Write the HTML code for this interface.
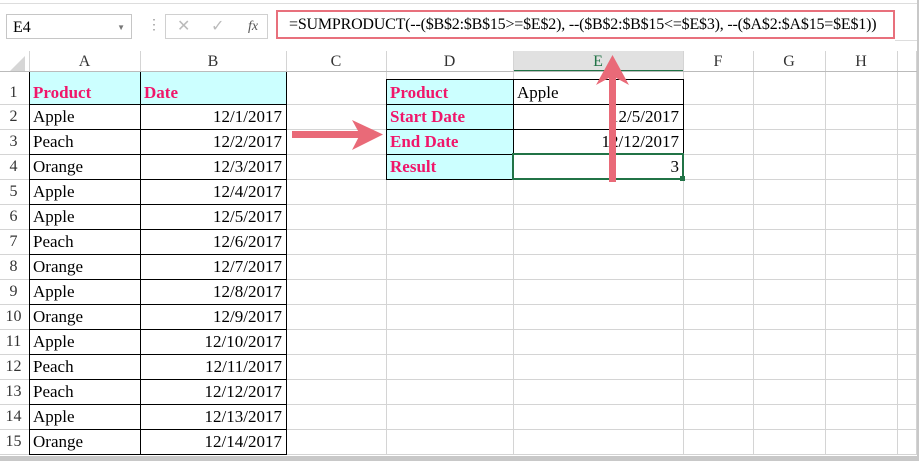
<!DOCTYPE html><html><head><style>
body{margin:0;width:919px;height:461px;background:#fff;position:relative;overflow:hidden;font-family:"Liberation Serif",serif}
.a{position:absolute}
.vl{position:absolute;width:1px;background:#d4d4d4;top:51px;height:404px}
.hl{position:absolute;height:1px;background:#d4d4d4;left:0;width:917px}
.ch{position:absolute;top:51px;height:21px;text-align:center;font-size:16px;line-height:21px;color:#333}
.rh{position:absolute;left:0;width:27px;text-align:center;font-size:16px;color:#333}
.c{position:absolute;font-size:17px;line-height:26px;box-sizing:border-box;padding:0 4px;white-space:nowrap}
.p{color:#f0166a;font-weight:bold}
.r{text-align:right}
</style></head><body>
<div class="a" style="left:0;top:3px;width:917px;height:1px;background:#ddd"></div>
<div class="a" style="left:6px;top:14px;width:126px;height:25px;border:1px solid #c6c6c6;font-family:'Liberation Serif',serif;font-size:16px;line-height:25px;padding-left:6px;box-sizing:border-box">E4<span style="position:absolute;right:6px;top:0;font-size:8px;color:#777">▼</span></div>
<div class="a" style="left:147px;top:17px;color:#999;font-size:14px">⋮</div>
<div class="a" style="left:165px;top:14px;width:103px;height:25px;border:1px solid #d0d0d0;box-sizing:border-box;color:#bbb;font-family:'Liberation Sans',sans-serif;font-size:16px;line-height:23px"><span style="position:absolute;left:11px">✕</span><span style="position:absolute;left:45px">✓</span><span style="position:absolute;left:82px;color:#555;font-style:italic;font-family:'Liberation Serif';font-size:14px">fx</span></div>
<div class="a" style="left:276px;top:10px;width:619px;height:29px;border:2px solid #e8707c;box-sizing:border-box;font-family:'Liberation Serif',serif;font-size:16px;line-height:25px;padding-left:11px;white-space:nowrap;letter-spacing:-0.2px">=SUMPRODUCT(--($B$2:$B$15&gt;=$E$2), --($B$2:$B$15&lt;=$E$3), --($A$2:$A$15=$E$1))</div>
<div class="a" style="left:895px;top:10px;width:22px;height:30px;border-bottom:1px solid #ddd"></div>
<div class="a" style="left:0;top:51px;width:917px;height:21px;background:#fff"></div>
<div class="a" style="left:513px;top:51px;width:170px;height:19px;background:#e1e1e1;border-bottom:2px solid #217346"></div>
<div class="a" style="left:10px;top:56px;width:0;height:0;border-left:15px solid transparent;border-bottom:15px solid #d6d6d6"></div>
<div class="ch" style="left:29px;width:111px">A</div><div class="ch" style="left:140px;width:146px">B</div><div class="ch" style="left:286px;width:100px">C</div><div class="ch" style="left:386px;width:127px">D</div><div class="ch" style="left:513px;width:170px;color:#217346">E</div><div class="ch" style="left:683px;width:70px">F</div><div class="ch" style="left:753px;width:72px">G</div><div class="ch" style="left:825px;width:72px">H</div>
<div class="vl" style="left:29px"></div><div class="vl" style="left:140px"></div><div class="vl" style="left:286px"></div><div class="vl" style="left:386px"></div><div class="vl" style="left:513px"></div><div class="vl" style="left:683px"></div><div class="vl" style="left:753px"></div><div class="vl" style="left:825px"></div><div class="vl" style="left:897px"></div><div class="vl" style="left:916px"></div>
<div class="hl" style="top:71px;background:#bbb"></div>
<div class="hl" style="top:104px"></div><div class="hl" style="top:129px"></div><div class="hl" style="top:154px"></div><div class="hl" style="top:179px"></div><div class="hl" style="top:204px"></div><div class="hl" style="top:229px"></div><div class="hl" style="top:254px"></div><div class="hl" style="top:279px"></div><div class="hl" style="top:304px"></div><div class="hl" style="top:329px"></div><div class="hl" style="top:354px"></div><div class="hl" style="top:379px"></div><div class="hl" style="top:404px"></div><div class="hl" style="top:429px"></div><div class="hl" style="top:454px"></div>
<div class="a" style="left:0;top:456px;width:919px;height:5px;background:#c8c8c8"></div>
<div class="a" style="left:917px;top:0;width:2px;height:461px;background:#c8c8c8"></div>
<div class="rh" style="top:80px;line-height:25px">1</div>
<div class="rh" style="top:104px;line-height:25px">2</div><div class="rh" style="top:129px;line-height:25px">3</div><div class="rh" style="top:154px;line-height:25px">4</div><div class="rh" style="top:179px;line-height:25px">5</div><div class="rh" style="top:204px;line-height:25px">6</div><div class="rh" style="top:229px;line-height:25px">7</div><div class="rh" style="top:254px;line-height:25px">8</div><div class="rh" style="top:279px;line-height:25px">9</div><div class="rh" style="top:304px;line-height:25px">10</div><div class="rh" style="top:329px;line-height:25px">11</div><div class="rh" style="top:354px;line-height:25px">12</div><div class="rh" style="top:379px;line-height:25px">13</div><div class="rh" style="top:404px;line-height:25px">14</div><div class="rh" style="top:429px;line-height:25px">15</div>
<div class="a" style="left:29px;top:72px;width:257px;height:32px;background:#ccffff"></div>
<div class="a" style="left:386px;top:79px;width:127px;height:100px;background:#ccffff"></div>
<div class="a" style="left:29px;top:72px;width:258px;height:383px;border:1px solid #000;box-sizing:border-box;border-top:none"></div>
<div class="a" style="left:140px;top:72px;width:1px;height:382px;background:#000"></div>
<div class="a" style="left:29px;top:104px;width:257px;height:350px;background:repeating-linear-gradient(#000 0 1px,transparent 1px 25px)"></div>
<div class="a" style="left:386px;top:79px;width:298px;height:101px;border:1px solid #000;box-sizing:border-box"></div>
<div class="a" style="left:513px;top:79px;width:1px;height:100px;background:#000"></div>
<div class="a" style="left:386px;top:104px;width:297px;height:75px;background:repeating-linear-gradient(#000 0 1px,transparent 1px 25px)"></div>
<div class="a" style="left:512px;top:153px;width:172px;height:27px;border:2px solid #217346;box-sizing:border-box"></div>
<div class="a" style="left:680px;top:176px;width:5px;height:5px;background:#217346"></div>
<div class="c p" style="left:29px;top:80px">Product</div><div class="c p" style="left:140px;top:80px">Date</div>
<div class="c p" style="left:386px;top:80px">Product</div><div class="c" style="left:513px;top:80px">Apple</div>
<div class="c p" style="left:386px;top:104px">Start Date</div><div class="c r" style="left:513px;top:104px;width:170px">12/5/2017</div>
<div class="c p" style="left:386px;top:129px">End Date</div><div class="c r" style="left:513px;top:129px;width:170px">12/12/2017</div>
<div class="c p" style="left:386px;top:154px">Result</div><div class="c r" style="left:513px;top:154px;width:170px">3</div>
<div class="c" style="left:29px;top:104px">Apple</div><div class="c r" style="left:140px;top:104px;width:146px">12/1/2017</div>
<div class="c" style="left:29px;top:129px">Peach</div><div class="c r" style="left:140px;top:129px;width:146px">12/2/2017</div>
<div class="c" style="left:29px;top:154px">Orange</div><div class="c r" style="left:140px;top:154px;width:146px">12/3/2017</div>
<div class="c" style="left:29px;top:179px">Apple</div><div class="c r" style="left:140px;top:179px;width:146px">12/4/2017</div>
<div class="c" style="left:29px;top:204px">Apple</div><div class="c r" style="left:140px;top:204px;width:146px">12/5/2017</div>
<div class="c" style="left:29px;top:229px">Peach</div><div class="c r" style="left:140px;top:229px;width:146px">12/6/2017</div>
<div class="c" style="left:29px;top:254px">Orange</div><div class="c r" style="left:140px;top:254px;width:146px">12/7/2017</div>
<div class="c" style="left:29px;top:279px">Apple</div><div class="c r" style="left:140px;top:279px;width:146px">12/8/2017</div>
<div class="c" style="left:29px;top:304px">Orange</div><div class="c r" style="left:140px;top:304px;width:146px">12/9/2017</div>
<div class="c" style="left:29px;top:329px">Apple</div><div class="c r" style="left:140px;top:329px;width:146px">12/10/2017</div>
<div class="c" style="left:29px;top:354px">Peach</div><div class="c r" style="left:140px;top:354px;width:146px">12/11/2017</div>
<div class="c" style="left:29px;top:379px">Peach</div><div class="c r" style="left:140px;top:379px;width:146px">12/12/2017</div>
<div class="c" style="left:29px;top:404px">Apple</div><div class="c r" style="left:140px;top:404px;width:146px">12/13/2017</div>
<div class="c" style="left:29px;top:429px">Orange</div><div class="c r" style="left:140px;top:429px;width:146px">12/14/2017</div>
<svg class="a" style="left:0;top:0" width="919" height="461">
<g fill="#e96a78">
<rect x="292" y="131" width="70" height="7"/>
<polygon points="352,120 383,134.5 352,150 360,134.5"/>
<rect x="609" y="70" width="7" height="112"/>
<polygon points="612.5,55 596,85 612.5,76 629,85"/>
</g></svg>
</body></html>
